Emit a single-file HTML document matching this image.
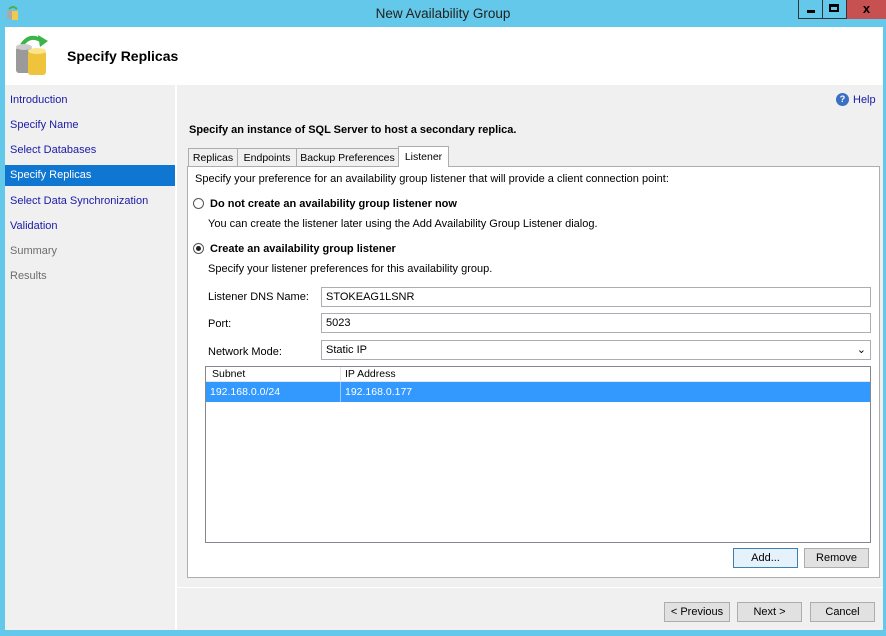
<!DOCTYPE html>
<html><head><style>
*{margin:0;padding:0;box-sizing:border-box}
body{width:886px;height:636px;background:#63c8e9;font-family:"Liberation Sans",sans-serif;font-size:11px;color:#000;position:relative;overflow:hidden}
.a{position:absolute}
.nav div{position:absolute;left:5px;width:170px;height:21px;line-height:21px;padding-left:5px;color:#1a1aa6}
.btn{position:absolute;height:20px;border:1px solid #adadad;background:#e1e1e1;text-align:center;line-height:18px}
.inp{position:absolute;left:321px;width:550px;height:20px;border:1px solid #abadb3;background:#fff;padding-left:4px;line-height:18px}
.tab{position:absolute;top:148px;height:19px;border:1px solid #adadad;background:#f0f0f0;text-align:center;line-height:18px;font-size:10.5px;white-space:nowrap;overflow:hidden}
</style></head><body>
<div class="a" style="left:0;top:0;width:886px;height:26px;text-align:center;line-height:27px;font-size:13.5px;color:#222">New Availability Group</div>
<svg class="a" style="left:6px;top:5px" width="14" height="16"><rect x="1" y="5" width="6" height="9" fill="#aaa"/><rect x="6" y="6" width="6" height="9" fill="#f2c94c"/><path d="M3 4 Q7 0 11 4" stroke="#4caf50" stroke-width="2" fill="none"/></svg>
<div class="a" style="left:798px;top:0;width:25px;height:19px;border:1px solid #333;border-top:none"><div class="a" style="left:8px;top:10px;width:8px;height:3px;background:#000"></div></div>
<div class="a" style="left:822px;top:0;width:25px;height:19px;border:1px solid #333;border-top:none;border-left:none"><div class="a" style="left:7px;top:4px;width:10px;height:8px;border:2px solid #000;border-top-width:3px"></div></div>
<div class="a" style="left:847px;top:0;width:39px;height:19px;background:#c75050;text-align:center;font-weight:bold;font-size:13px;line-height:18px">x</div>
<div class="a" style="left:5px;top:27px;width:878px;height:58px;background:#fff"></div>
<svg class="a" style="left:14px;top:33px" width="38" height="44"><path d="M8 12 Q16 0 28 8" stroke="#3bb54a" stroke-width="4" fill="none"/><polygon points="24,2 34,8 26,14" fill="#3bb54a"/><rect x="2" y="14" width="16" height="26" rx="3" fill="#9a9a9a"/><ellipse cx="10" cy="14" rx="8" ry="3" fill="#ccc"/><rect x="14" y="18" width="18" height="24" rx="3" fill="#f0c33c"/><ellipse cx="23" cy="18" rx="9" ry="3" fill="#fbe58a"/></svg>
<div class="a" style="left:67px;top:48px;font-size:14px;font-weight:bold">Specify Replicas</div>
<div class="a" style="left:5px;top:85px;width:878px;height:545px;background:#f0f0f0"></div>
<div class="a" style="left:175px;top:85px;width:2px;height:545px;background:#fff"></div>
<div class="nav">
<div style="top:90px">Introduction</div><div style="top:115px">Specify Name</div><div style="top:140px">Select Databases</div>
<div style="top:165px;background:#0f76d1;color:#fff">Specify Replicas</div>
<div style="top:191px">Select Data Synchronization</div><div style="top:216px">Validation</div>
<div style="top:241px;color:#6d6d6d">Summary</div><div style="top:266px;color:#6d6d6d">Results</div>
</div>
<div class="a" style="left:836px;top:93px;width:13px;height:13px;border-radius:50%;background:#3a6fc4;color:#fff;font-size:9px;text-align:center;line-height:13px;font-weight:bold">?</div>
<div class="a" style="left:853px;top:94px;color:#1a1aa6">Help</div>
<div class="a" style="left:189px;top:124px;font-weight:bold">Specify an instance of SQL Server to host a secondary replica.</div>
<div class="a" style="left:187px;top:166px;width:693px;height:412px;border:1px solid #adadad;background:#fff"></div>
<div class="tab" style="left:188px;width:50px">Replicas</div>
<div class="tab" style="left:237px;width:60px">Endpoints</div>
<div class="tab" style="left:296px;width:103px">Backup Preferences</div>
<div class="a" style="left:398px;top:146px;width:51px;height:21px;border:1px solid #adadad;border-bottom:none;background:#fff;text-align:center;line-height:20px;font-size:10.5px">Listener</div>
<div class="a" style="left:195px;top:173px">Specify your preference for an availability group listener that will provide a client connection point:</div>
<div class="a" style="left:193px;top:198px;width:11px;height:11px;border:1px solid #555;border-radius:50%"></div>
<div class="a" style="left:210px;top:198px;font-weight:bold">Do not create an availability group listener now</div>
<div class="a" style="left:208px;top:218px">You can create the listener later using the Add Availability Group Listener dialog.</div>
<div class="a" style="left:193px;top:243px;width:11px;height:11px;border:1px solid #555;border-radius:50%"><div class="a" style="left:2px;top:2px;width:5px;height:5px;border-radius:50%;background:#222"></div></div>
<div class="a" style="left:210px;top:243px;font-weight:bold">Create an availability group listener</div>
<div class="a" style="left:208px;top:263px">Specify your listener preferences for this availability group.</div>
<div class="a" style="left:208px;top:291px">Listener DNS Name:</div>
<div class="inp" style="top:287px">STOKEAG1LSNR</div>
<div class="a" style="left:208px;top:318px">Port:</div>
<div class="inp" style="top:313px">5023</div>
<div class="a" style="left:208px;top:346px">Network Mode:</div>
<div class="inp" style="top:340px">Static IP<span style="position:absolute;right:4px;top:0">&#8964;</span></div>
<div class="a" style="left:205px;top:366px;width:666px;height:177px;border:1px solid #828790;background:#fff"></div>
<div class="a" style="left:206px;top:367px;width:664px;height:15px;border-bottom:1px solid #e5e5e5;line-height:15px;font-size:10.5px"><span class="a" style="left:6px">Subnet</span><span class="a" style="left:134px;top:0;height:15px;border-left:1px solid #e5e5e5;padding-left:4px">IP Address</span></div>
<div class="a" style="left:206px;top:382px;width:664px;height:20px;background:#3399ff;color:#fff;line-height:20px;font-size:10.5px"><span class="a" style="left:4px">192.168.0.0/24</span><span class="a" style="left:134px;height:20px;border-left:1px solid #9cc9f5;padding-left:4px">192.168.0.177</span></div>
<div class="btn" style="left:733px;top:548px;width:65px;border-color:#3c7fb1;background:#e5f1fb">Add...</div>
<div class="btn" style="left:804px;top:548px;width:65px">Remove</div>
<div class="a" style="left:177px;top:587px;width:706px;height:1px;background:#fff"></div>
<div class="btn" style="left:664px;top:602px;width:66px">&lt; Previous</div>
<div class="btn" style="left:737px;top:602px;width:65px">Next &gt;</div>
<div class="btn" style="left:810px;top:602px;width:65px">Cancel</div>
</body></html>
